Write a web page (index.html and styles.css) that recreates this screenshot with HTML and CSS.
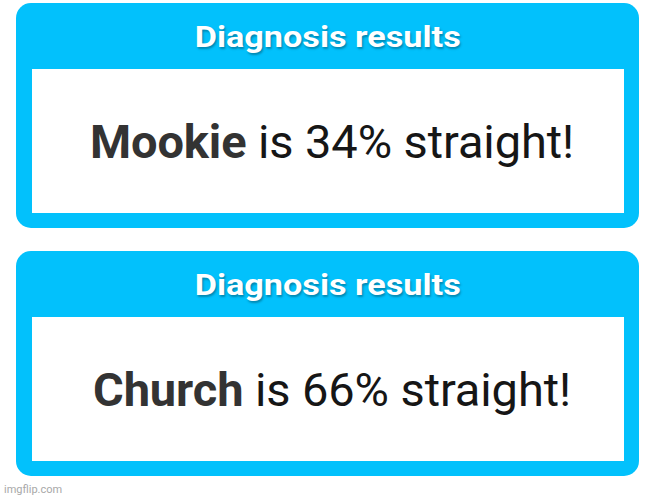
FILE: index.html
```html
<!DOCTYPE html>
<html>
<head>
<meta charset="utf-8">
<link rel="stylesheet" href="styles.css">
</head>
<body>
<div class="page">
  <div class="card">
    <div class="card-head"><span class="head-text">Diagnosis results</span></div>
    <div class="card-body"><p class="result"><b>Mookie</b> is 34% straight!</p></div>
  </div>
  <div class="card">
    <div class="card-head"><span class="head-text">Diagnosis results</span></div>
    <div class="card-body"><p class="result"><b>Church</b> is 66% straight!</p></div>
  </div>
</div>
<div class="watermark">imgflip.com</div>
</body>
</html>
```
FILE: styles.css
```css
html, body {
  margin: 0;
  padding: 0;
  background: #ffffff;
  width: 654px;
  height: 499px;
  overflow: hidden;
  font-family: Roboto, "Liberation Sans", sans-serif;
}
.page {
  display: flex;
  flex-direction: column;
  gap: 23px;
  padding: 3px 0 0 16px;
}
.card {
  width: 623px;
  height: 225px;
  box-sizing: border-box;
  background: #02c1fc;
  border-radius: 15px;
  padding: 0 15px 15px 16px;
  display: flex;
  flex-direction: column;
}
.card-head {
  height: 66px;
  display: flex;
  align-items: center;
  justify-content: center;
  padding-top: 1px;
  box-sizing: border-box;
}
.head-text {
  display: inline-block;
  color: #ffffff;
  font-weight: 700;
  font-size: 29px;
  text-shadow: 1px 2px 2px rgba(0, 0, 0, 0.3);
  transform: scaleX(1.18);
}
.card-body {
  flex: 1;
  background: #ffffff;
  display: flex;
  align-items: center;
  justify-content: center;
  padding-left: 8px;
}
.result {
  margin: 0;
  font-size: 47px;
  color: #161616;
  letter-spacing: -0.1px;
}
.result b {
  color: #333333;
  font-weight: 700;
}
.watermark {
  position: absolute;
  left: 4px;
  top: 483px;
  font-size: 11px;
  color: #a8a8a8;
}
```
